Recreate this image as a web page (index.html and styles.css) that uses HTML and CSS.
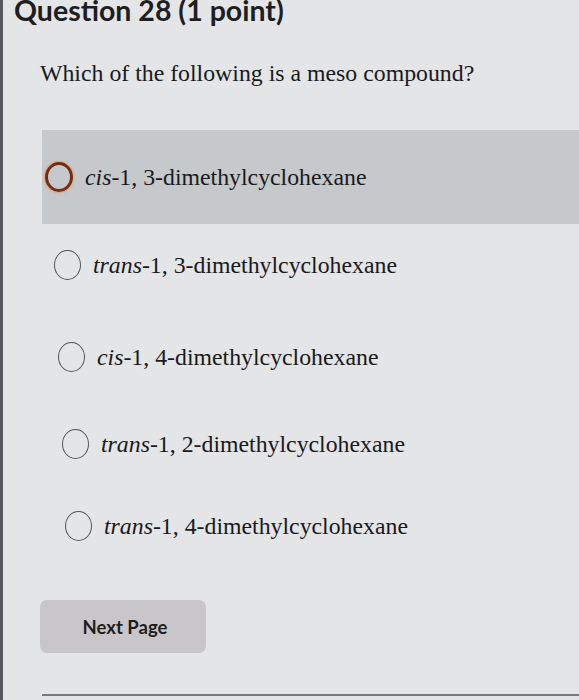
FILE: index.html
```html
<!DOCTYPE html>
<html>
<head>
<meta charset="utf-8">
<link rel="stylesheet" href="styles.css">
</head>
<body>
<div class="page">
  <h1 class="title">Question 28 (1 point)</h1>
  <p class="question">Which of the following is a meso compound?</p>
  <div class="options">
    <div class="option selected o1"><span class="radio"></span><span class="label"><i>cis</i>-1, 3-dimethylcyclohexane</span></div>
    <div class="option o2"><span class="radio"></span><span class="label"><i>trans</i>-1, 3-dimethylcyclohexane</span></div>
    <div class="option o3"><span class="radio"></span><span class="label"><i>cis</i>-1, 4-dimethylcyclohexane</span></div>
    <div class="option o4"><span class="radio"></span><span class="label"><i>trans</i>-1, 2-dimethylcyclohexane</span></div>
    <div class="option o5"><span class="radio"></span><span class="label"><i>trans</i>-1, 4-dimethylcyclohexane</span></div>
  </div>
  <div class="actions"><button class="next">Next Page</button></div>
  <div class="rule"></div>
</div>
</body>
</html>
```
FILE: styles.css
```css
html, body {
  margin: 0;
  padding: 0;
  background: #e3e5e7;
}
body {
  width: 579px;
  height: 700px;
  overflow: hidden;
  border-left: 3px solid #55585c;
  box-sizing: border-box;
}
.page {
  display: flex;
  flex-direction: column;
}
.title {
  margin: -7px 0 0 11px;
  font-family: Lato, sans-serif;
  font-weight: 700;
  font-size: 28.5px;
  line-height: 34px;
  color: #1e1e1e;
}
.question {
  margin: 31px 0 0 37px;
  font-family: "Liberation Serif", serif;
  font-size: 23.8px;
  line-height: 30px;
  color: #1a1a1a;
}
.options {
  margin-top: 42px;
  display: flex;
  flex-direction: column;
}
.option {
  display: flex;
  align-items: center;
  font-family: "Liberation Serif", serif;
  font-size: 23.8px;
  line-height: 28px;
  color: #1a1a1a;
}
.option .radio {
  width: 27px;
  height: 30px;
  border: 1.5px solid #555;
  border-radius: 50%;
  box-sizing: border-box;
  flex: none;
}
.label { margin-left: 12px; }
.option.selected {
  background: #c5c9cc;
  margin-left: 39px;
  height: 94px;
  padding-left: 3px;
}
.option.selected .radio {
  border: 3px solid #7a2c10;
  box-shadow: 0 0 2px 1px rgba(230,140,90,0.6);
  width: 28px;
  height: 30px;
}
.o2 { margin-left: 51px; margin-top: 26px; }
.o3 { margin-left: 55px; margin-top: 62px; }
.o4 { margin-left: 59px; margin-top: 57px; }
.o5 { margin-left: 62px; margin-top: 52px; }
.actions {
  margin: 59px 0 0 37px;
}
.next {
  width: 166px;
  height: 53px;
  border: none;
  border-radius: 7px;
  background: #c9c6c9;
  font-family: Lato, sans-serif;
  font-weight: 700;
  font-size: 18.5px;
  color: #1e1e1e;
  padding: 0 0 0 4px;
}
.rule {
  margin: 41px 0 0 39px;
  height: 2px;
  background: #77787a;
}
```
